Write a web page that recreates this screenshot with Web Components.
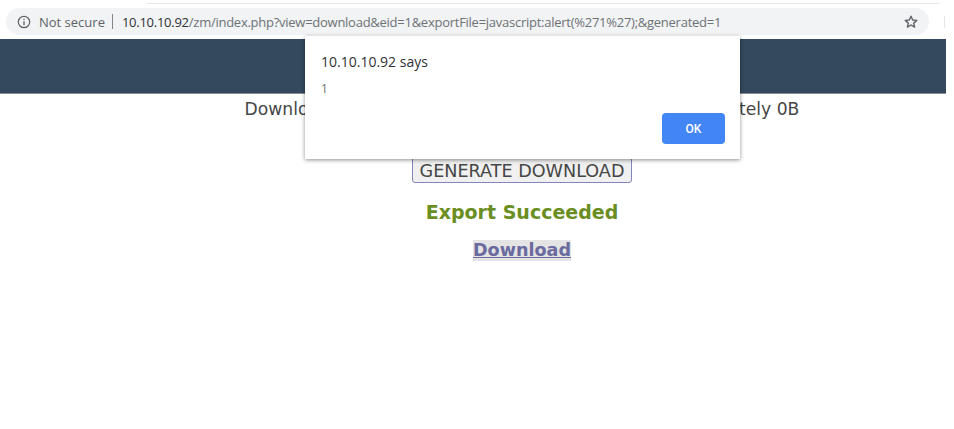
<!DOCTYPE html>
<html>
<head>
<meta charset="utf-8">
<title>Export</title>
<style>
html,body{margin:0;padding:0;background:#fff;height:429px;overflow:hidden}
</style>
</head>
<body>
<browser-bar>
  <span slot="host">10.10.10.92</span>
  <span slot="path">/zm/index.php?view=download&amp;eid=1&amp;exportFile=javascript:alert(%271%27);&amp;generated=1</span>
</browser-bar>
<export-page size="0B"></export-page>
<alert-box origin="10.10.10.92" message="1"></alert-box>
<script>
customElements.define("browser-bar", class extends HTMLElement {
    connectedCallback() {
        this.attachShadow({mode: "open"}).innerHTML = `<style>
            :host{display:block;height:39px;box-sizing:border-box;padding:3px 0 0 0;font:13px "Open Sans","Noto Sans",sans-serif}
            .strip{height:1px;margin:0 14px 0 147px;background:#e6e7e9}
            .row{display:flex;align-items:center;gap:15px;margin-top:4px;padding-right:9px}
            .omni{flex:1;height:27px;margin-left:6px;border-radius:14px;background:#f1f3f4;display:flex;align-items:center;padding:0 10px 0 11px;color:#5f6368;white-space:nowrap}
            .info{width:14px;height:14px;flex:none}
            .sec{margin-left:8px;color:#5f6368}
            .sep{width:1px;height:15px;background:#80868b;margin:0 9px 0 7px}
            .url{flex:1;color:#6e7276;letter-spacing:-.02em}
            ::slotted([slot=host]){color:#303134}
            .star{width:16px;height:16px;flex:none}
            .ext{width:1px;height:12px;background:#e6e7e9}
        </style>
        <div class="strip"></div>
        <div class="row">
            <div class="omni">
                <svg class="info" viewBox="0 0 14 14"><circle cx="7" cy="7" r="5.7" fill="none" stroke="#5f6368" stroke-width="1.2"/><path d="M7 6.2v4M7 3.8v1.3" stroke="#5f6368" stroke-width="1.3" fill="none"/></svg>
                <span class="sec">Not secure</span><span class="sep"></span>
                <span class="url"><slot name="host"></slot><slot name="path"></slot></span>
                <svg class="star" viewBox="0 0 16 16"><path d="M8 2.2l1.7 3.8 4.1.4-3.1 2.7.9 4L8 11l-3.6 2.1.9-4-3.1-2.7 4.1-.4z" fill="none" stroke="#5f6368" stroke-width="1.4" stroke-linejoin="round"/></svg>
            </div>
            <span class="ext"></span>
        </div>`;
    }
});

customElements.define("export-page", class extends HTMLElement {
    connectedCallback() {
        let size = this.getAttribute("size");
        this.attachShadow({mode: "open"}).innerHTML = `<style>
            :host{display:block;width:946px;font:17.15px "DejaVu Sans",sans-serif;color:#464646}
            .banner{height:55px;background:#34495e;border-bottom:1px solid #8c8c8c;box-sizing:border-box}
            .body{display:flex;flex-direction:column;align-items:center;padding-left:98px;padding-top:5px}
            p{margin:0;line-height:21px;white-space:nowrap}
            button{margin-top:37px;height:26px;width:220px;box-sizing:border-box;padding:1px 0 0;font:17.6px "DejaVu Sans",sans-serif;color:#464646;background:#f0f0f0;border:1px solid #8585bd;border-radius:3px}
            h3{margin:16px 0 0;font:bold 19px/26px "DejaVu Sans",sans-serif;color:#6b8e23}
            a{margin-top:15px;font:bold 17.6px/21px "DejaVu Sans",sans-serif;color:#6a6a9f;background:#e4e4e4;text-decoration:underline}
        </style>
        <div class="banner"></div>
        <div class="body">
            <p>Download file size is currently estimated to be approximately ${size}</p>
            <button>GENERATE DOWNLOAD</button>
            <h3>Export Succeeded</h3>
            <a href="#">Download</a>
        </div>`;
    }
});

customElements.define("alert-box", class extends HTMLElement {
    connectedCallback() {
        this.attachShadow({mode: "open"}).innerHTML = `<style>
            :host{position:absolute;left:305px;top:36px;width:435px;height:123px;box-sizing:border-box;background:#fff;box-shadow:0 1px 4px rgba(0,0,0,.45);padding:16px 15px 15px 16px;display:flex;flex-direction:column;font-family:"Open Sans","Noto Sans",sans-serif}
            .origin{font-size:14px;line-height:20px;color:#303134}
            .msg{font-size:12px;line-height:16px;margin-top:9px;color:#6e7276}
            .actions{margin-top:auto;display:flex;justify-content:flex-end}
            button{width:63px;height:31px;border:0;border-radius:4px;background:#4285f4;color:#fff;font:500 12px "Roboto",sans-serif;padding:0}
        </style>
        <div class="origin">${this.getAttribute("origin")} says</div>
        <div class="msg">${this.getAttribute("message")}</div>
        <div class="actions"><button>OK</button></div>`;
    }
});
</script>
</body>
</html>
